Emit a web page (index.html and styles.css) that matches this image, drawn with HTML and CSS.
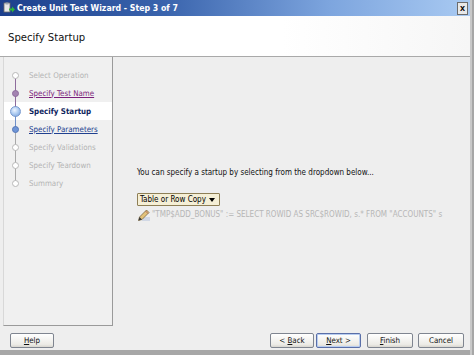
FILE: index.html
```html
<!DOCTYPE html>
<html lang="en">
<head>
<meta charset="UTF-8" />
<meta name="viewport" content="width=device-width, initial-scale=1.0" />
<title>Create Unit Test Wizard</title>
<link rel="stylesheet" href="styles.css">
</head>
<body>
  <div class="window">
    <div class="titlebar">
      <svg class="app-icon" width="12" height="12" viewBox="0 0 12 12">
        <rect x="1" y="1" width="6" height="9" fill="#e8e8e8" stroke="#6a6a6a" stroke-width="0.8"/>
        <rect x="2.5" y="0.5" width="3" height="2" fill="#9aa3b0"/>
        <path d="M6 6.5h3v-2l3 3-3 3v-2H6z" fill="#2fb43a"/>
      </svg>
      <span class="title">Create Unit Test Wizard - Step 3 of 7</span>
      <span class="close">x</span>
    </div>

    <div class="header">
      <h1>Specify Startup</h1>
    </div>

    <div class="main">
      <ul class="steps">
        <li class="step step-first"><span class="mark"><span class="dot"></span></span><span class="label">Select Operation</span></li>
        <li class="step step-visited"><span class="mark"><span class="dot"></span></span><a class="label" href="#">Specify Test Name</a></li>
        <li class="step step-current"><span class="mark"><span class="dot"></span></span><span class="label">Specify Startup</span></li>
        <li class="step step-next"><span class="mark"><span class="dot"></span></span><a class="label" href="#">Specify Parameters</a></li>
        <li class="step"><span class="mark"><span class="dot"></span></span><span class="label">Specify Validations</span></li>
        <li class="step"><span class="mark"><span class="dot"></span></span><span class="label">Specify Teardown</span></li>
        <li class="step step-last"><span class="mark"><span class="dot"></span></span><span class="label">Summary</span></li>
      </ul>

      <div class="content">
        <p class="hint">You can specify a startup by selecting from the dropdown below...</p>
        <div class="dropdown">Table or Row Copy <span class="arrow"></span></div>
        <div class="sql">
          <svg class="pencil" width="14" height="14" viewBox="0 0 14 14">
            <rect x="5" y="9" width="8" height="4" fill="#c9d2e2" opacity="0.8"/>
            <path d="M1.5 12.5l1-3.5 7-7 2.5 2.5-7 7z" fill="#e3c27a" stroke="#6b5a33" stroke-width="0.7"/>
            <path d="M1.5 12.5l1-3.5 2.5 2.5z" fill="#3a3a3a"/>
            <path d="M8.5 3l2.5 2.5" stroke="#b06a60" stroke-width="1"/>
          </svg>
          <span class="sql-text">"TMP$ADD_BONUS" := SELECT ROWID AS SRC$ROWID, s.* FROM "ACCOUNTS" s</span>
        </div>
      </div>
    </div>

    <div class="footer">
      <button class="btn btn-help"><u>H</u>elp</button>
      <div class="nav-buttons">
        <button class="btn btn-back">&lt; <u>B</u>ack</button>
        <button class="btn btn-next"><u>N</u>ext &gt;</button>
        <button class="btn btn-finish"><u>F</u>inish</button>
        <button class="btn btn-cancel">Cancel</button>
      </div>
    </div>
  </div>
</body>
</html>
```

FILE: styles.css
```css
html, body {
  margin: 0;
  padding: 0;
}
body {
  font-family: "DejaVu Sans Condensed", "DejaVu Sans", sans-serif;
  font-size: 8px;
  background: #a7a7a7;
}
.window {
  width: 470px;
  height: 355px;
  background: #eeeeee;
  display: flex;
  flex-direction: column;
  border-right: 2px solid #c9c9c9;
}

/* title bar */
.titlebar {
  flex: none;
  height: 16px;
  display: flex;
  align-items: center;
  padding: 0 2px 0 3px;
  background: linear-gradient(to right, #1c3f8c 0%, #3a64ad 35%, #7da5de 70%, #a9caf2 100%);
}
.app-icon {
  margin-right: 2px;
}
.title {
  color: #ffffff;
  font-weight: bold;
  font-size: 8.7px;
  flex: 1;
}
.close {
  width: 9px;
  height: 11px;
  line-height: 10px;
  text-align: center;
  font-weight: bold;
  font-size: 9px;
  color: #000;
  background: #e8e8e8;
  border: 1px solid #6c6c6c;
  font-family: "Liberation Sans", sans-serif;
}

/* header */
.header {
  flex: none;
  height: 40px;
  background: linear-gradient(to right, #ffffff 0%, #ffffff 60%, #f6f6f6 100%);
  border-bottom: 1px solid #a9a9a9;
  display: flex;
  align-items: center;
  padding-left: 8px;
}
.header h1 {
  margin: 0;
  font-size: 11.2px;
  font-weight: normal;
  color: #111;
  padding-top: 2px;
}

/* main */
.main {
  flex: none;
  height: 269px;
  display: flex;
}
.steps {
  list-style: none;
  margin: 0 0 0 3px;
  padding: 9px 0 0 0;
  width: 110px;
  background: #f0f0f0;
  border-left: 1px solid #d8d8d8;
  border-right: 1px solid #9a9a9a;
  border-bottom: 1px solid #9a9a9a;
  box-sizing: border-box;
  font-size: 7.9px;
}
.step {
  height: 18px;
  display: flex;
  align-items: center;
  color: #b4b4b4;
}
.mark {
  position: relative;
  width: 24px;
  height: 18px;
  display: flex;
  align-items: center;
  justify-content: center;
}
.mark::before,
.mark::after {
  content: "";
  position: absolute;
  left: 11px;
  width: 1px;
  height: 9px;
  background: #a8a8a8;
}
.mark::before { top: 0; }
.mark::after { bottom: 0; }
.step-first .mark::before,
.step-last .mark::after { display: none; }
.step-first .mark::after,
.step-visited .mark::before,
.step-visited .mark::after,
.step-current .mark::before { background: #8e6c9c; }
.step-current .mark::after,
.step-next .mark::before { background: #6f8fc8; }

.dot {
  position: relative;
  z-index: 1;
  width: 5px;
  height: 5px;
  border-radius: 50%;
  background: #ffffff;
  border: 1px solid #b8b8b8;
  margin-left: -1px;
}
.step-visited .dot {
  background: #a383b1;
  border-color: #8e6c9c;
}
.step-current .dot {
  width: 9px;
  height: 9px;
  border-color: #7a9bd0;
  background: radial-gradient(circle at 40% 35%, #eef5ff 0%, #b2cff3 45%, #6f9ad8 100%);
}
.step-next .dot {
  background: #6f95d6;
  border-color: #5577b8;
}
.label {
  margin-left: 1px;
}
a.label {
  text-decoration: underline;
}
.step-visited .label { color: #7b1f7b; }
.step-next .label { color: #20408f; }
.step-current {
  background: #ffffff;
}
.step-current .label {
  color: #0f2660;
  font-weight: bold;
}

/* content */
.content {
  flex: 1;
  padding: 111px 0 0 24px;
}
.hint {
  margin: 0;
  line-height: 10px;
  color: #111;
}
.dropdown {
  margin-top: 15px;
  width: 79px;
  height: 11px;
  line-height: 11px;
  padding-left: 2px;
  background: #f5efd6;
  border: 1px solid #8e7f56;
  border-radius: 1px;
  color: #000;
  display: flex;
  align-items: center;
}
.arrow {
  width: 0;
  height: 0;
  margin-left: 3px;
  border-left: 3.5px solid transparent;
  border-right: 3.5px solid transparent;
  border-top: 4px solid #000;
}
.sql {
  display: flex;
  align-items: flex-start;
  margin-top: 2px;
  height: 15px;
}
.pencil {
  flex: none;
}
.sql-text {
  color: #b6b6b6;
  margin-top: 2px;
  margin-left: 1px;
}

/* footer */
.footer {
  flex: none;
  height: 29px;
  display: flex;
  align-items: flex-start;
  justify-content: space-between;
  padding: 7px 6px 0 10px;
  box-sizing: border-box;
  border-bottom: 5px solid #a7a7a7;
}
.nav-buttons {
  display: flex;
}
.btn {
  height: 15px;
  width: 44px;
  padding: 0;
  font-family: inherit;
  font-size: 7.9px;
  color: #111;
  background: linear-gradient(#ffffff, #ecebe6 80%, #d8d6cf);
  border: 1px solid #7f8590;
  border-radius: 2px;
}
.btn-next {
  margin-left: 2px;
  width: 45px;
  border-color: #5a6fa8;
  box-shadow: inset 0 0 0 1px #b8cdf0;
}
.btn-finish {
  margin-left: 6px;
  width: 46px;
}
.btn-cancel {
  margin-left: 5px;
  width: 46px;
}
```
